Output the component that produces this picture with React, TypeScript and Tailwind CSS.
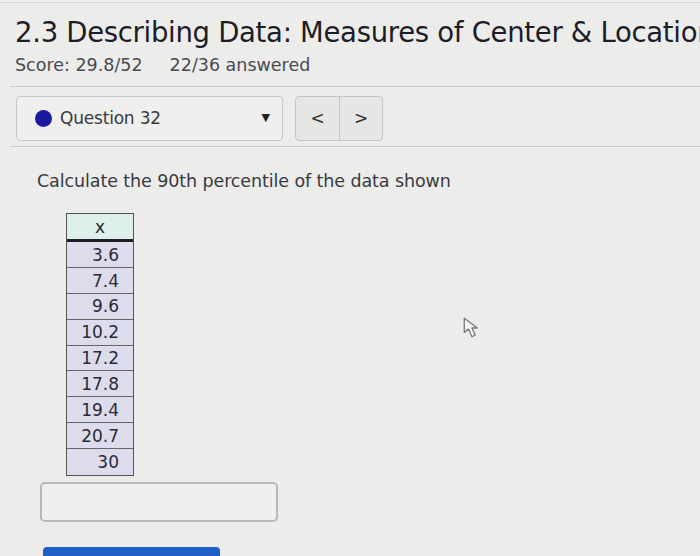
import React from "react";

const values = ["3.6", "7.4", "9.6", "10.2", "17.2", "17.8", "19.4", "20.7", "30"];

export default function App() {
  return (
    <div
      className="w-[700px] h-[556px] overflow-hidden bg-[#ececea] text-[#222230] relative"
      style={{ fontFamily: '"DejaVu Sans", "Noto Sans", sans-serif' }}
    >
      <div className="h-[3px] border-b border-[#d4d4d2]" />
      <div className="pl-[15px] pt-[11px]">
        <h1 className="text-[27.5px] leading-[36px] whitespace-nowrap tracking-[-0.3px] text-[#1d1d28]">
          2.3 Describing Data: Measures of Center &amp; Location
        </h1>
        <div className="mt-[4px] text-[17.5px] leading-[22px] text-[#4a4a50] flex gap-[27px] tracking-[0px]">
          <span>Score: 29.8/52</span>
          <span>22/36 answered</span>
        </div>
      </div>
      <div className="mt-[10px] ml-[10px] border-t border-[#c9c9c7]" />
      <div className="flex items-center pl-[16px] pt-[9px] gap-[12px]">
        <div className="w-[267px] h-[45px] rounded-[4px] border border-[#c8c8c6] bg-[#efefed] flex items-center pl-[18px] pr-[12px]">
          <span className="w-[17px] h-[17px] rounded-full bg-[#1c1a9c]" />
          <span className="ml-[8px] text-[17px] text-[#3a3a44] tracking-[-0.2px]">Question 32</span>
          <span className="ml-auto mr-[0px] text-[11px] text-[#222]">▼</span>
        </div>
        <div className="flex h-[45px] rounded-[4px] border border-[#c4c4c2] bg-[#e6e6e4]">
          <div className="w-[44px] flex items-center justify-center border-r border-[#c4c4c2] text-[17px] text-[#333]">
            &lt;
          </div>
          <div className="w-[42px] flex items-center justify-center text-[17px] text-[#333]">&gt;</div>
        </div>
      </div>
      <div className="mt-[5px] ml-[10px] border-t border-[#c9c9c7]" />
      <div className="pl-[37px] pt-[22px] text-[17.5px] leading-[24px] text-[#3a3a40] tracking-[-0.1px]">
        Calculate the 90th percentile of the data shown
      </div>
      <div className="ml-[66px] mt-[20px] w-[68px] border border-[#555] text-[17px] text-[#2a2a36]">
        <div className="h-[28px] bg-[#dcefea] border-b-[3px] border-[#1e1e24] flex items-center justify-center pt-[2px]">
          x
        </div>
        {values.map((v, i) => (
          <div
            key={v}
            className={`h-[25.9px] bg-[#dcdced] flex items-center justify-end pr-[14px] pt-[2px] ${
              i < values.length - 1 ? "border-b border-[#666]" : ""
            }`}
          >
            {v}
          </div>
        ))}
      </div>
      <div className="ml-[40px] mt-[6px] w-[238px] h-[40px] rounded-[5px] border-2 border-[#b8b8b6] bg-[#efefed]" />
      <div className="ml-[43px] mt-[25px] w-[177px] h-[12px] rounded-t-[4px] bg-[#1f5fc6]" />
      <svg className="absolute left-[462px] top-[316px]" width="22" height="24" viewBox="0 0 20 22">
        <path
          d="M2 2 L2 15 L6 12 L9 19 L12 17.5 L9 11 L14 11 Z"
          fill="#f5f5f3"
          stroke="#7a7a7a"
          strokeWidth="1.2"
          strokeLinejoin="round"
        />
      </svg>
    </div>
  );
}
